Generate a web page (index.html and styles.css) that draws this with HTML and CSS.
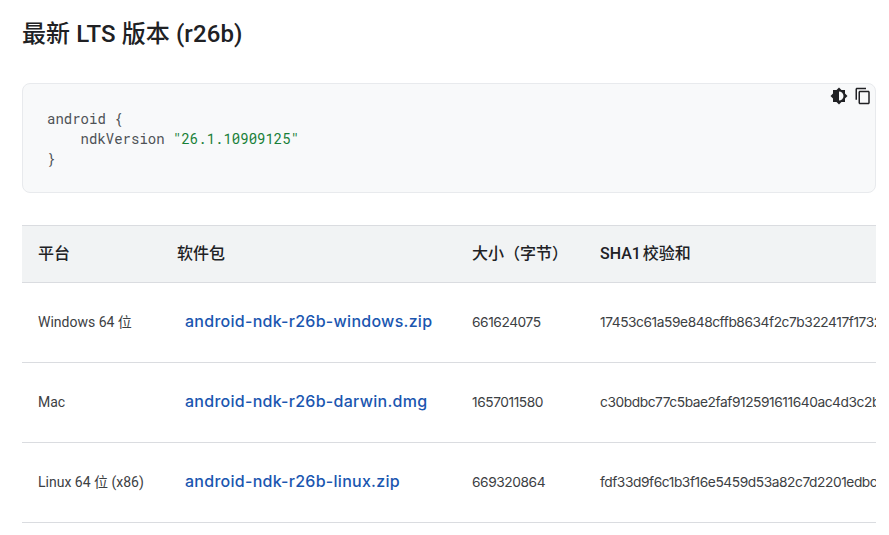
FILE: index.html
```html
<!DOCTYPE html>
<html lang="zh">
<head>
<meta charset="utf-8">
<title>最新 LTS 版本 (r26b)</title>
<link rel="stylesheet" href="styles.css">
</head>
<body>
<main class="page">
  <h2 class="title">最新 LTS 版本 (r26b)</h2>
  <div class="code-card">
    <div class="code-tools">
      <svg class="tool" viewBox="0 0 24 24" width="18" height="18"><path fill="#202124" d="M20 8.69V4h-4.69L12 .69 8.69 4H4v4.69L.69 12 4 15.31V20h4.69L12 23.31 15.31 20H20v-4.69L23.31 12 20 8.69zM12 18V6c3.31 0 6 2.69 6 6s-2.69 6-6 6z"/></svg>
      <svg class="tool" viewBox="0 0 24 24" width="18" height="18"><path fill="#202124" d="M16 1H4c-1.1 0-2 .9-2 2v14h2V3h12V1zm3 4H8c-1.1 0-2 .9-2 2v14c0 1.1.9 2 2 2h11c1.1 0 2-.9 2-2V7c0-1.1-.9-2-2-2zm0 16H8V7h11v14z"/></svg>
    </div>
<pre class="code">android {
    ndkVersion <span class="str">"26.1.10909125"</span>
}</pre>
  </div>
  <div class="table-wrap">
    <table class="dl">
      <colgroup><col class="c1"><col class="c2"><col class="c3"><col class="c4"></colgroup>
      <thead>
        <tr><th>平台</th><th>软件包</th><th>大小（字节）</th><th>SHA1 校验和</th></tr>
      </thead>
      <tbody>
        <tr><td>Windows 64 位</td><td><a class="pkg" href="#">android-ndk-r26b-windows.zip</a></td><td class="num">661624075</td><td class="num">17453c61a59e848cffb8634f2c7b322417f1732e</td></tr>
        <tr><td>Mac</td><td><a class="pkg" href="#">android-ndk-r26b-darwin.dmg</a></td><td class="num">1657011580</td><td class="num">c30bdbc77c5bae2faf912591611640ac4d3c2b3a</td></tr>
        <tr><td>Linux 64 位 (x86)</td><td><a class="pkg" href="#">android-ndk-r26b-linux.zip</a></td><td class="num">669320864</td><td class="num">fdf33d9f6c1b3f16e5459d53a82c7d2201edbcc4</td></tr>
      </tbody>
    </table>
  </div>
</main>
</body>
</html>
```

FILE: styles.css
```css
* { box-sizing: border-box; }
html, body { margin: 0; padding: 0; background: #fff; }
body {
  font-family: Roboto, "Noto Sans CJK SC", sans-serif;
  color: #202124;
  overflow: hidden;
  height: 535px;
}
.page { padding: 0 13px 0 22px; }
.title {
  margin: 0;
  padding-top: 18px;
  height: 83px;
  font-size: 24px;
  line-height: 32px;
  font-weight: 500;
  letter-spacing: .1px;
}
.code-card {
  position: relative;
  height: 110px;
  background: #f8f9fa;
  border: 1px solid #e8eaed;
  border-radius: 8px;
  padding: 25px 24px 0;
}
.code-tools {
  position: absolute;
  top: 3px;
  right: 3px;
  display: flex;
  gap: 6px;
}
.code {
  margin: 0;
  font-family: "Roboto Mono", "DejaVu Sans Mono", monospace;
  font-size: 14px;
  line-height: 20px;
  color: #4e5256;
}
.str { color: #188038; }
.table-wrap { margin-top: 32px; overflow: hidden; }
.dl { border-collapse: collapse; table-layout: fixed; width: 854px; }
.c1 { width: 139px; }
.c2 { width: 295px; }
.c3 { width: 128px; }
.c4 { width: 292px; }
.dl th {
  height: 57px;
  background: #f1f3f4;
  border-top: 1px solid #dadce0;
  border-bottom: 1px solid #dadce0;
  padding: 0 16px;
  text-align: left;
  font-size: 16px;
  line-height: 22px;
  font-weight: 500;
  white-space: nowrap;
  word-spacing: -2px;
}
.dl td {
  height: 80px;
  border-bottom: 1px solid #dadce0;
  padding: 0 16px 2px;
  font-size: 14px;
  line-height: 20px;
  color: #3c4043;
  white-space: nowrap;
  overflow: hidden;
}
.dl td.num { font-family: Inter, Roboto, sans-serif; font-size: 13.75px; letter-spacing: -.44px; }
.pkg {
  margin-left: 8px;
  color: #1a56b0;
  font-family: Inter, Roboto, sans-serif;
  font-size: 16px;
  font-weight: 500;
  letter-spacing: .27px;
  text-decoration: none;
  vertical-align: 1px;
}
```
